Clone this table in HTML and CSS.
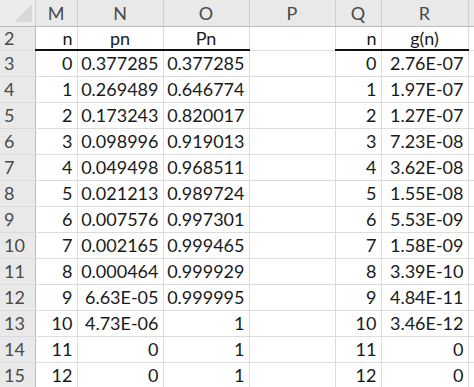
FILE: index.html
```html
<!DOCTYPE html>
<html>
<head>
<meta charset="utf-8">
<link rel="stylesheet" href="styles.css">
</head>
<body>
<table class="sheet">
  <colgroup>
    <col class="c-rh"><col class="c-m"><col class="c-n"><col class="c-o"><col class="c-p"><col class="c-q"><col class="c-r"><col class="c-s">
  </colgroup>
  <thead>
    <tr class="colhead">
      <th class="corner"><span class="tri"></span></th>
      <th>M</th><th>N</th><th>O</th><th>P</th><th>Q</th><th>R</th><th class="last"></th>
    </tr>
  </thead>
  <tbody>
    <tr class="r2">
      <th class="rh">2</th>
      <td class="ul">n</td><td class="ul ctr">pn</td><td class="ul ctr">Pn</td><td></td><td class="ul">n</td><td class="ul ctr">g(n)</td><td></td>
    </tr>
    <tr><th class="rh">3</th><td>0</td><td>0.377285</td><td>0.377285</td><td></td><td>0</td><td>2.76E-07</td><td></td></tr>
    <tr><th class="rh">4</th><td>1</td><td>0.269489</td><td>0.646774</td><td></td><td>1</td><td>1.97E-07</td><td></td></tr>
    <tr><th class="rh">5</th><td>2</td><td>0.173243</td><td>0.820017</td><td></td><td>2</td><td>1.27E-07</td><td></td></tr>
    <tr><th class="rh">6</th><td>3</td><td>0.098996</td><td>0.919013</td><td></td><td>3</td><td>7.23E-08</td><td></td></tr>
    <tr><th class="rh">7</th><td>4</td><td>0.049498</td><td>0.968511</td><td></td><td>4</td><td>3.62E-08</td><td></td></tr>
    <tr><th class="rh">8</th><td>5</td><td>0.021213</td><td>0.989724</td><td></td><td>5</td><td>1.55E-08</td><td></td></tr>
    <tr><th class="rh">9</th><td>6</td><td>0.007576</td><td>0.997301</td><td></td><td>6</td><td>5.53E-09</td><td></td></tr>
    <tr><th class="rh">10</th><td>7</td><td>0.002165</td><td>0.999465</td><td></td><td>7</td><td>1.58E-09</td><td></td></tr>
    <tr><th class="rh">11</th><td>8</td><td>0.000464</td><td>0.999929</td><td></td><td>8</td><td>3.39E-10</td><td></td></tr>
    <tr><th class="rh">12</th><td>9</td><td>6.63E-05</td><td>0.999995</td><td></td><td>9</td><td>4.84E-11</td><td></td></tr>
    <tr><th class="rh">13</th><td>10</td><td>4.73E-06</td><td>1</td><td></td><td>10</td><td>3.46E-12</td><td></td></tr>
    <tr><th class="rh">14</th><td>11</td><td>0</td><td>1</td><td></td><td>11</td><td>0</td><td></td></tr>
    <tr><th class="rh">15</th><td>12</td><td>0</td><td>1</td><td></td><td>12</td><td>0</td><td></td></tr>
  </tbody>
</table>
</body>
</html>
```
FILE: styles.css
```css
html, body {
  margin: 0;
  padding: 0;
  background: #ffffff;
  overflow: hidden;
}
.sheet {
  border-collapse: collapse;
  table-layout: fixed;
  width: 474px;
  font-family: Lato, "Open Sans", sans-serif;
  font-size: 18px;
  color: #1a1a1a;
}
.c-rh { width: 35px; }
.c-m { width: 42px; }
.c-n { width: 86px; }
.c-o { width: 86px; }
.c-p { width: 86px; }
.c-q { width: 46px; }
.c-r { width: 87px; }
.c-s { width: 6px; }

.colhead th {
  height: 26px;
  padding: 0;
  background: #e9e9e9;
  color: #4a4a4a;
  font-weight: normal;
  text-align: center;
  border-right: 1px solid #cfcfcf;
  border-bottom: 1px solid #bdbdbd;
  box-sizing: border-box;
}
.colhead th.corner {
  position: relative;
  background: #ececec;
}
.colhead th.last { border-right: none; }
.tri {
  position: absolute;
  right: 3px;
  bottom: 4px;
  width: 0;
  height: 0;
  border-left: 18px solid transparent;
  border-bottom: 18px solid #d9d9d9;
}
th.rh {
  padding: 0 0 0 4px;
  background: #e9e9e9;
  color: #4a4a4a;
  font-weight: normal;
  text-align: left;
  border-right: 1px solid #bdbdbd;
  border-bottom: 1px solid #dcdcdc;
}
tbody tr { height: 26px; }
tbody tr.r2 { height: 24px; }
td {
  padding: 0 4px 0 0;
  text-align: right;
  white-space: nowrap;
  border-right: 1px solid #dcdcdc;
  border-bottom: 1px solid #dcdcdc;
  line-height: 1;
}
td:last-child { border-right: none; }
td.ctr { text-align: center; padding: 0; }
td.ul { border-bottom: 2px solid #111111; }
```
